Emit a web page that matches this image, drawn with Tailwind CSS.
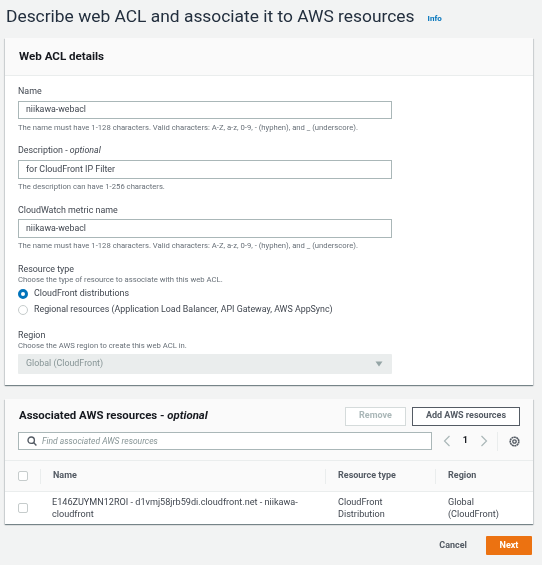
<!DOCTYPE html>
<html lang="en">
<head>
  <meta charset="UTF-8" />
  <title>Describe web ACL</title>
  <script src="https://cdn.jsdelivr.net/npm/@tailwindcss/browser@4"></script>
</head>
<body class="bg-[#f2f3f3] text-[#16191f] font-['Roboto',sans-serif] h-[565px] w-[542px] overflow-hidden blur-[0.35px]">
  <div class="h-[38px] pl-[6px] flex items-start">
    <h1 class="text-[17.4px] leading-[32px] text-[#232f3e]">Describe web ACL and associate it to AWS resources</h1>
    <a class="ml-[13px] mt-[12px] text-[8px] leading-[14px] font-bold text-[#0073bb]">Info</a>
  </div>

  <!-- details card -->
  <section class="mx-[5px] w-[528px] h-[347px] bg-white shadow-[0_1px_1px_0_rgba(0,28,36,0.4),1px_1px_1px_0_rgba(0,28,36,0.1),-1px_1px_1px_0_rgba(0,28,36,0.1)]">
    <div class="h-[38px] bg-[#fafafa] border-b border-[#eaeded] px-[14px] flex items-center">
      <h2 class="text-[11.6px] font-bold">Web ACL details</h2>
    </div>
    <div class="px-[13px]">
      <div class="mt-[8px] text-[8.9px] leading-[14px] text-[#414750]">Name</div>
      <div class="mt-[3px] w-[374px] h-[18px] border border-[#aab7b8] flex items-center pl-[7px] text-[8.8px] text-[#414750]">niikawa-webacl</div>
      <div class="mt-[3px] text-[7.7px] leading-[11px] text-[#687078]">The name must have 1-128 characters. Valid characters: A-Z, a-z, 0-9, - (hyphen), and _ (underscore).</div>

      <div class="mt-[10px] text-[8.9px] leading-[14px] text-[#414750]">Description - <i>optional</i></div>
      <div class="mt-[3px] w-[374px] h-[19px] border border-[#aab7b8] flex items-center pl-[7px] text-[8.9px] text-[#414750]">for CloudFront IP Filter</div>
      <div class="mt-[2px] text-[7.7px] leading-[11px] text-[#687078]">The description can have 1-256 characters.</div>

      <div class="mt-[11px] text-[8.9px] leading-[14px] text-[#414750]">CloudWatch metric name</div>
      <div class="mt-[2px] w-[374px] h-[19px] border border-[#aab7b8] flex items-center pl-[7px] text-[8.8px] text-[#414750]">niikawa-webacl</div>
      <div class="mt-[2px] text-[7.7px] leading-[11px] text-[#687078]">The name must have 1-128 characters. Valid characters: A-Z, a-z, 0-9, - (hyphen), and _ (underscore).</div>

      <div class="mt-[12px] text-[8.9px] leading-[12px] text-[#414750]">Resource type</div>
      <div class="text-[7.7px] leading-[9px] text-[#687078]">Choose the type of resource to associate with this web ACL.</div>
      <div class="mt-[2px] flex items-center h-[16px] text-[8.9px] text-[#414750]">
        <span class="w-[10px] h-[10px] rounded-full border-[3px] border-[#0073bb] bg-white"></span>
        <span class="ml-[6px]">CloudFront distributions</span>
      </div>
      <div class="flex items-center h-[16px] text-[8.85px] text-[#414750]">
        <span class="w-[10px] h-[10px] rounded-full border border-[#c6cccc] bg-white"></span>
        <span class="ml-[6px]">Regional resources (Application Load Balancer, API Gateway, AWS AppSync)</span>
      </div>

      <div class="mt-[11px] text-[8.9px] leading-[12px] text-[#414750]">Region</div>
      <div class="text-[7.7px] leading-[9px] text-[#687078]">Choose the AWS region to create this web ACL in.</div>
      <div class="mt-[4px] w-[374px] h-[20px] bg-[#eaeded] rounded-[1px] flex items-center justify-between pl-[8px] pr-[9px] text-[8.9px] text-[#879596]">
        <span>Global (CloudFront)</span>
        <svg width="8" height="6" viewBox="0 0 8 6"><path d="M0.5 0.5h7L4 5.5z" fill="#95a5a6"/></svg>
      </div>
    </div>
  </section>

  <!-- associated resources card -->
  <section class="mx-[5px] mt-[14px] w-[528px] h-[125px] bg-white shadow-[0_1px_1px_0_rgba(0,28,36,0.4),1px_1px_1px_0_rgba(0,28,36,0.1),-1px_1px_1px_0_rgba(0,28,36,0.1)]">
    <div class="h-[62px] bg-[#fafafa] border-b border-[#eaeded] px-[13px] pt-[8px]">
      <div class="flex items-center h-[18px]">
        <h2 class="text-[11.4px] font-bold ml-[1px]">Associated AWS resources - <i class="font-bold">optional</i></h2>
        <button class="ml-auto w-[61px] h-[19px] border border-[#d5dbdb] bg-white text-[9px] font-bold text-[#aab7b8]">Remove</button>
        <button class="ml-[6px] w-[108px] h-[19px] border border-[#545b64] bg-white text-[9px] font-bold text-[#545b64]">Add AWS resources</button>
      </div>
      <div class="flex items-center mt-[7px] h-[18px]">
        <div class="w-[414px] h-[18px] border border-[#aab7b8] bg-white flex items-center pl-[8px]">
          <svg width="10" height="10" viewBox="0 0 10 10" fill="none" stroke="#545b64" stroke-width="1.4"><circle cx="4.2" cy="4.2" r="3.2"/><path d="M6.6 6.6L9.4 9.4"/></svg>
          <span class="ml-[5px] text-[8.5px] italic text-[#879596]">Find associated AWS resources</span>
        </div>
        <svg class="ml-[11px]" width="8" height="12" viewBox="0 0 8 12" fill="none" stroke="#aab7b8" stroke-width="1.2"><path d="M6.5 1L1.5 6l5 5"/></svg>
        <span class="ml-[12px] text-[9px] font-bold text-[#16191f]">1</span>
        <svg class="ml-[12px]" width="8" height="12" viewBox="0 0 8 12" fill="none" stroke="#aab7b8" stroke-width="1.2"><path d="M1.5 1l5 5-5 5"/></svg>
        <span class="ml-[9px] w-px h-[19px] bg-[#eaeded]"></span>
        <svg class="ml-[11px]" width="11" height="11" viewBox="0 0 11 11" fill="none" stroke="#545b64"><circle cx="5.5" cy="5.5" r="4.3" stroke-width="1.6" stroke-dasharray="2 0.4"/><circle cx="5.5" cy="5.5" r="1.7" stroke-width="1.3"/></svg>
      </div>
    </div>
    <div class="flex h-[31px] bg-[#fafafa] border-b border-[#eaeded] text-[9px] font-bold text-[#545b64]">
      <div class="w-[36px] pl-[13px] flex items-center relative">
        <span class="block w-[10px] h-[10px] border border-[#c6cccc] rounded-[2px] bg-white"></span>
        <span class="absolute right-0 top-[8px] w-px h-[15px] bg-[#eaeded]"></span>
      </div>
      <div class="w-[285px] pl-[12px] flex items-center relative">Name
        <span class="absolute right-0 top-[8px] w-px h-[15px] bg-[#eaeded]"></span>
      </div>
      <div class="w-[110px] pl-[12px] flex items-center relative">Resource type
        <span class="absolute right-0 top-[8px] w-px h-[15px] bg-[#eaeded]"></span>
      </div>
      <div class="flex-1 pl-[12px] flex items-center">Region</div>
    </div>
    <div class="flex h-[32px] text-[9.1px] leading-[12px] text-[#414750]">
      <div class="w-[36px] pl-[13px] flex items-center">
        <span class="block w-[10px] h-[10px] border border-[#c6cccc] rounded-[2px] bg-white"></span>
      </div>
      <div class="w-[285px] pl-[11px] pr-[20px] flex items-center">E146ZUYMN12ROI - d1vmj58jrb59di.cloudfront.net - niikawa-cloudfront</div>
      <div class="w-[110px] pl-[12px] pr-[40px] flex items-center">CloudFront Distribution</div>
      <div class="flex-1 pl-[12px] pr-[20px] flex items-center">Global (CloudFront)</div>
    </div>
  </section>

  <div class="flex items-center justify-end w-[532px] mt-[12px]">
    <button class="text-[9px] font-bold text-[#545b64]">Cancel</button>
    <button class="ml-[19px] w-[46px] h-[19px] bg-[#ec7211] text-white text-[9px] font-bold rounded-[1px]">Next</button>
  </div>
</body>
</html>
